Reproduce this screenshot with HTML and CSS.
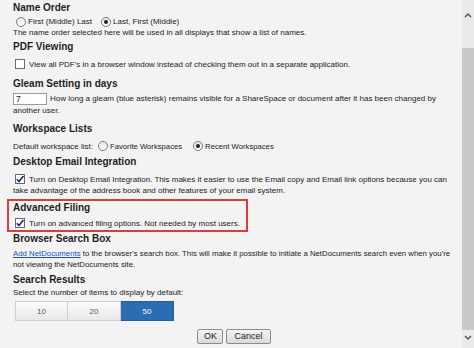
FILE: index.html
```html
<!DOCTYPE html>
<html>
<head>
    <meta charset="utf-8">
    <title>Settings</title>
    <link rel="stylesheet" href="styles.css">
</head>
<body>
<div class="window">
    <div class="content">

        <div class="section s-name">
            <h2>Name Order</h2>
            <div class="row radios">
                <span class="radio"></span><span class="lbl">First (Middle) Last</span>
                <span class="radio on"></span><span class="lbl">Last, First (Middle)</span>
            </div>
            <p>The name order selected here will be used in all displays that show a list of names.</p>
        </div>

        <div class="section s-pdf">
            <h2>PDF Viewing</h2>
            <div class="row check-row">
                <span class="check"></span><span>View all PDF's in a browser window instead of checking them out in a separate application.</span>
            </div>
        </div>

        <div class="section s-gleam">
            <h2>Gleam Setting in days</h2>
            <p><span class="num-input">7</span>How long a gleam (blue asterisk) remains visible for a ShareSpace or document after it has been changed by another user.</p>
        </div>

        <div class="section s-ws">
            <h2>Workspace Lists</h2>
            <div class="row">
                <span class="ws-label">Default workspace list:</span>
                <span class="radio"></span><span class="lbl small">Favorite Workspaces</span>
                <span class="radio on"></span><span class="lbl small">Recent Workspaces</span>
            </div>
        </div>

        <div class="section s-email">
            <h2>Desktop Email Integration</h2>
            <p><span class="check on">
                <svg viewBox="0 0 10 10" width="10" height="10"><path d="M1.8 5.2 L4 7.6 L8.4 2" fill="none" stroke="#1f2a6b" stroke-width="1.6"/></svg>
            </span>Turn on Desktop Email Integration. This makes it easier to use the Email copy and Email link options because you can take advantage of the address book and other features of your email system.</p>
        </div>

        <div class="section highlight">
            <h2>Advanced Filing</h2>
            <div class="row check-row">
                <span class="check on">
                    <svg viewBox="0 0 10 10" width="10" height="10"><path d="M1.8 5.2 L4 7.6 L8.4 2" fill="none" stroke="#1f2a6b" stroke-width="1.6"/></svg>
                </span><span>Turn on advanced filing options. Not needed by most users.</span>
            </div>
        </div>

        <div class="section s-browser">
            <h2>Browser Search Box</h2>
            <p><a href="#">Add NetDocuments</a> to the browser's search box. This will make it possible to initiate a NetDocuments search even when you're not viewing the NetDocuments site.</p>
        </div>

        <div class="section s-search">
            <h2>Search Results</h2>
            <p>Select the number of items to display by default:</p>
            <div class="segments">
                <span class="seg">10</span>
                <span class="seg">20</span>
                <span class="seg active">50</span>
            </div>
        </div>

        <div class="actions">
            <button class="btn ok">OK</button>
            <button class="btn">Cancel</button>
        </div>

    </div>

    <div class="scrollbar">
        <div class="arrow">
            <svg viewBox="0 0 8 6" width="8" height="6"><path d="M1 5 L4 2 L7 5" fill="none" stroke="#555" stroke-width="1.5"/></svg>
        </div>
        <div class="thumb"></div>
        <div class="arrow down">
            <svg viewBox="0 0 8 6" width="8" height="6"><path d="M1 1 L4 4 L7 1" fill="none" stroke="#555" stroke-width="1.5"/></svg>
        </div>
    </div>
</div>
</body>
</html>
```

FILE: styles.css
```css
html, body {
    margin: 0;
    padding: 0;
}
body {
    background: #f3f3f3;
    font-family: "Liberation Sans", Arial, sans-serif;
    font-size: 8px;
    color: #222;
}
.window {
    display: flex;
    height: 348px;
    overflow: hidden;
}
.content {
    flex: 1;
    padding: 1px 7px 0 13px;
}

/* sections */
.section h2 {
    font-size: 10px;
    font-weight: bold;
    line-height: 14px;
    margin: 0 0 2px 0;
    color: #1e1e1e;
}
.section p {
    margin: 0;
    line-height: 11px;
}
.s-name { margin-bottom: 2px; }
.s-name h2 { margin-bottom: 1px; }
.s-pdf { margin-bottom: 6px; }
.s-pdf h2 { margin-bottom: 3px; }
.s-gleam { margin-bottom: 6px; }
.s-ws { margin-bottom: 2px; }
.s-ws h2 { margin-bottom: 3px; }
.s-email { margin-bottom: 3px; }
.s-email h2 { margin-bottom: 5px; }
.s-browser { margin-bottom: 3px; }
.s-browser p { font-size: 7.8px; }
.s-search h2 { margin-bottom: 0; }

.row {
    display: flex;
    align-items: center;
    height: 14px;
}
.radios {
    height: 11px;
}
.lbl {
    margin-right: 6px;
}
.lbl.small {
    font-size: 7.7px;
    margin-right: 8px;
}
.ws-label {
    margin-right: 2px;
}

/* controls */
.radio {
    width: 8px;
    height: 8px;
    border: 1px solid #7a7a7a;
    border-radius: 50%;
    background: linear-gradient(#e6e6e6, #ffffff);
    margin: 0 2px 0 3px;
    display: inline-flex;
    align-items: center;
    justify-content: center;
    flex: none;
}
.radio.on::after {
    content: "";
    width: 4px;
    height: 4px;
    border-radius: 50%;
    background: #202020;
}
.check {
    display: inline-block;
    width: 10px;
    height: 10px;
    box-sizing: border-box;
    border: 1px solid #6f6f6f;
    background: #fff;
    margin: 0 4px 0 2px;
    vertical-align: -2px;
    position: relative;
    flex: none;
}
.check svg {
    position: absolute;
    left: -1px;
    top: -1px;
}
.check.on {
    border-color: #5b6a8a;
}
.num-input {
    display: inline-block;
    width: 34px;
    height: 12px;
    box-sizing: border-box;
    border: 1px solid #9a9a9a;
    background: #fff;
    padding-left: 2px;
    line-height: 10px;
    vertical-align: middle;
    margin-right: 3px;
    font-size: 8.5px;
}

/* highlighted block */
.highlight {
    width: 241px;
    box-sizing: border-box;
    border: 2px solid #dc3c3c;
    margin: 0 0 0 -6px;
    padding: 0 0 0 4px;
}
.highlight h2 {
    margin-bottom: 1px;
}

a {
    color: #1c4fc7;
    text-decoration: underline;
}

/* segmented control */
.segments {
    display: flex;
    margin: 3px 0 0 2px;
}
.seg {
    width: 53px;
    height: 20px;
    box-sizing: border-box;
    border: 1px solid #cfcfcf;
    border-left-width: 0;
    background: linear-gradient(#fbfbfb, #e8e8e8);
    display: flex;
    align-items: center;
    justify-content: center;
    color: #555;
}
.seg:first-child {
    border-left-width: 1px;
}
.seg.active {
    background: #2c6cb2;
    border-color: #245e9e;
    color: #fff;
}

/* dialog buttons */
.actions {
    display: flex;
    justify-content: center;
    gap: 3px;
    margin-top: 8px;
}
.btn {
    height: 15px;
    padding: 0 7px;
    border: 1px solid #8c8c8c;
    border-radius: 2px;
    background: linear-gradient(#f4f4f4, #dadada);
    font-family: "Liberation Sans", Arial, sans-serif;
    font-size: 9px;
    color: #222;
    line-height: 13px;
}
.btn.ok {
    width: 26px;
    padding: 0;
}

/* scrollbar */
.scrollbar {
    width: 12px;
    background: #eaeaea;
    display: flex;
    flex-direction: column;
}
.arrow {
    height: 48px;
    display: flex;
    justify-content: center;
    align-items: flex-start;
    padding-top: 12px;
    box-sizing: border-box;
}
.arrow.down {
    height: 18px;
    padding-top: 5px;
}
.thumb {
    flex: 1;
    background: #c9c9c9;
}
```
